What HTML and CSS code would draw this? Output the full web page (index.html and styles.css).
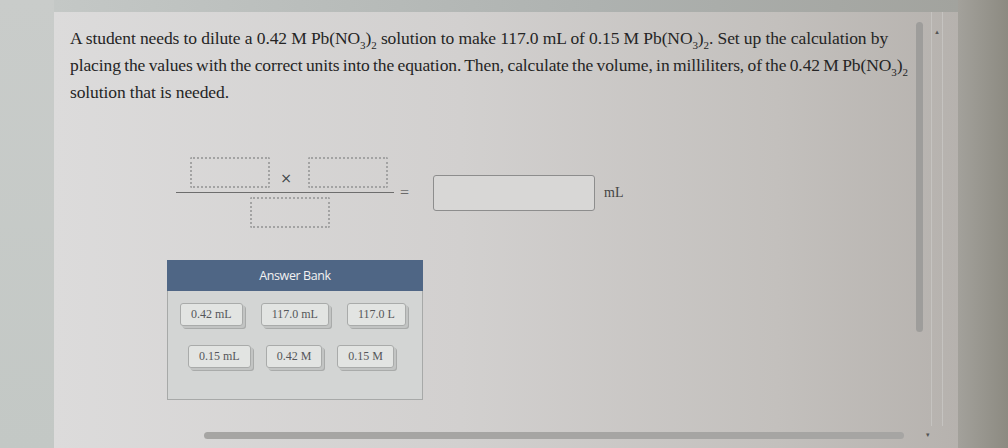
FILE: index.html
```html
<!DOCTYPE html>
<html lang="en">
<head>
<meta charset="UTF-8" />
<meta name="viewport" content="width=device-width, initial-scale=1" />
<title>Dilution</title>
<link rel="stylesheet" href="styles.css">
</head>
<body>
  <div class="screen">
    <div class="gutter"></div>
    <div class="frame">
      <div class="top-strip"></div>
      <div class="main">
        <div class="content">
          <p class="question">
            A student needs to dilute a 0.42 M Pb(NO<sub>3</sub>)<sub>2</sub> solution to make 117.0 mL of 0.15 M Pb(NO<sub>3</sub>)<sub>2</sub>. Set up the calculation by<br />
            <span class="tight">placing the values with the correct units into the equation. Then, calculate the volume, in milliliters, of the 0.42 M Pb(NO<sub>3</sub>)<sub>2</sub></span><br />
            solution that is needed.
          </p>

          <div class="equation">
            <div class="fraction">
              <div class="numerator">
                <div class="slot"></div>
                <span class="times">×</span>
                <div class="slot"></div>
              </div>
              <div class="denominator">
                <div class="slot"></div>
              </div>
            </div>
            <span class="equals">=</span>
            <div class="answer-box"></div>
            <span class="unit">mL</span>
          </div>

          <div class="bank">
            <div class="bank-header">Answer Bank</div>
            <div class="bank-body">
              <div class="bank-row">
                <div class="tile">0.42 mL</div>
                <div class="tile">117.0 mL</div>
                <div class="tile">117.0 L</div>
              </div>
              <div class="bank-row second">
                <div class="tile">0.15 mL</div>
                <div class="tile">0.42 M</div>
                <div class="tile">0.15 M</div>
              </div>
            </div>
          </div>
        </div>
        <div class="vscroll">
          <div class="vthumb"></div>
          <div class="vtrack"><span class="arrow">▴</span></div>
        </div>
      </div>
      <div class="hscroll">
        <div class="hthumb"></div>
        <span class="arrow">▾</span>
      </div>
    </div>
    <div class="edge"></div>
  </div>
</body>
</html>
```

FILE: styles.css
```css
html, body {
  margin: 0;
  padding: 0;
  height: 100%;
  overflow: hidden;
}

body {
  background-color: #c6cac7;
  font-family: "Liberation Serif", "Times New Roman", serif;
  color: #252525;
}

.screen {
  display: flex;
  height: 448px;
}

.gutter {
  flex: 0 0 54px;
  background: linear-gradient(to bottom, #c9ccca, #c3c8c5);
}

.frame {
  flex: 1;
  min-width: 0;
  display: flex;
  flex-direction: column;
  background: linear-gradient(to right, #dcdbdb 0%, #d2d0cf 45%, #c3c0bd 80%, #b6b2ae 100%);
}

.top-strip {
  height: 12px;
  background: linear-gradient(to right, #c4c8c6, #aeb2b0 60%, #a2a39e);
}

.main {
  flex: 1;
  display: flex;
}

.content {
  flex: 1;
  min-width: 0;
  padding: 13px 0 0 16px;
}

.question {
  margin: 0;
  font-size: 17.5px;
  line-height: 27px;
  white-space: nowrap;
  letter-spacing: -0.1px;
}

.question .tight {
  word-spacing: -0.9px;
}

.question sub {
  font-size: 11px;
  line-height: 0;
}

/* equation row */
.equation {
  display: flex;
  align-items: center;
  margin: 51px 0 0 110px;
}

.fraction {
  display: flex;
  flex-direction: column;
  align-items: center;
  width: 210px;
}

.numerator {
  display: flex;
  align-items: flex-end;
  gap: 10px;
  padding: 0 6px 4px 14px;
  border-bottom: 1px solid #6d6d6d;
}

.numerator .slot:last-child {
  margin-left: 6px;
}

.denominator {
  padding-top: 4px;
  margin-left: 10px;
}

.slot {
  width: 76px;
  height: 27px;
  border: 2px dotted #a3a3a3;
  border-radius: 2px;
}

.times {
  font-family: "DejaVu Sans", sans-serif;
  font-size: 14px;
  color: #3c4448;
  margin-bottom: 2px;
}

.equals {
  font-size: 16px;
  color: #6a6a6a;
  margin: 0 24px 0 10px;
}

.answer-box {
  width: 160px;
  height: 34px;
  border: 1px solid #8d8d8d;
  border-radius: 3px;
  background-color: #d8d7d6;
}

.unit {
  font-size: 14px;
  color: #444;
  margin-left: 9px;
}

/* answer bank */
.bank {
  width: 256px;
  margin: 32px 0 0 97px;
}

.bank-header {
  background-color: #4f6685;
  color: #f2f2f2;
  font-family: "Open Sans", "DejaVu Sans", sans-serif;
  font-size: 12.5px;
  letter-spacing: -0.4px;
  text-align: center;
  height: 31px;
  line-height: 31px;
}

.bank-body {
  border: 1px solid #a7a9a8;
  border-top: none;
  background-color: #d3d5d4;
  height: 109px;
  padding-top: 12px;
  box-sizing: border-box;
}

.bank-row {
  display: flex;
  gap: 18px;
  padding-left: 12px;
}

.bank-row.second {
  margin-top: 19px;
  padding-left: 20px;
  gap: 15px;
}

.tile {
  background-color: #e2e4e2;
  border: 1px solid #a9abaa;
  border-radius: 3px;
  box-shadow: 2px 2px 0 #c2c4c3, 3px 3px 0 #a9abaa;
  padding: 4px 10px;
  font-size: 12px;
  line-height: 13px;
  color: #55575a;
  white-space: nowrap;
}

/* scrollbars */
.vscroll {
  flex: 0 0 50px;
  display: flex;
  gap: 8px;
  padding-left: 8px;
  box-sizing: border-box;
}

.vthumb {
  width: 7px;
  height: 310px;
  margin-top: 10px;
  border-radius: 4px;
  background-color: #9e9d9b;
}

.vtrack {
  width: 10px;
  border-left: 1px solid #c5c3c0;
  border-right: 1px solid #c5c3c0;
  padding-top: 8px;
  text-align: center;
}

.arrow {
  font-family: "DejaVu Sans", sans-serif;
  font-size: 7px;
  color: #555;
}

.hscroll {
  height: 22px;
  display: flex;
  align-items: flex-start;
  padding: 6px 0 0 150px;
  box-sizing: border-box;
}

.hthumb {
  width: 700px;
  height: 7px;
  border-radius: 4px;
  background-color: #a6a5a3;
}

.hscroll .arrow {
  margin: 0 0 0 22px;
  line-height: 7px;
}

.edge {
  flex: 0 0 50px;
  background: linear-gradient(to right, #a3a19b, #8c8a81);
}
```
